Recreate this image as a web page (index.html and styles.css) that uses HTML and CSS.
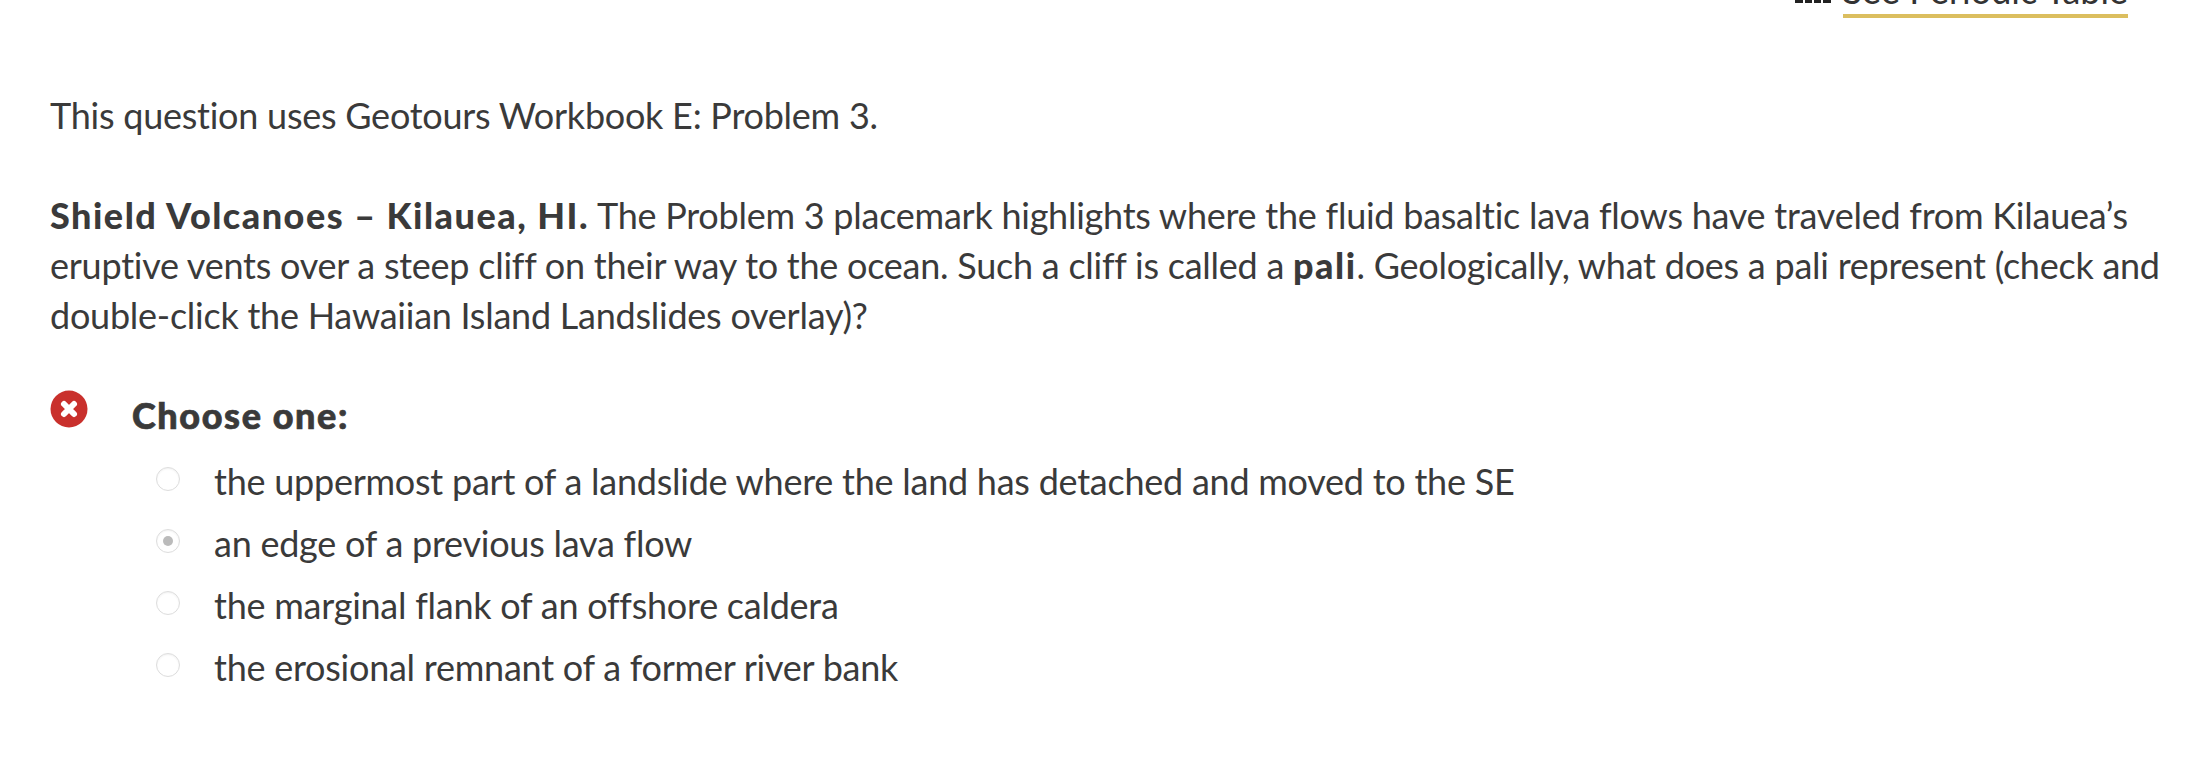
FILE: index.html
```html
<!DOCTYPE html>
<html lang="en">
<head>
<meta charset="utf-8">
<title>Question</title>
<link rel="stylesheet" href="styles.css">
</head>
<body>
<header class="topbar">
  <svg class="table-icon" viewBox="0 0 36 40" aria-hidden="true"><path d="M0 0h8v8H0zM10 0h7v8h-7zM19 0h7v8h-7zM28 0h8v8h-8z"/></svg>
  <a class="table-link">See Periodic Table</a>
</header>
<main class="question">
  <p class="intro">This question uses Geotours Workbook E: Problem 3.</p>
  <p class="stem"><strong>Shield Volcanoes – Kilauea, HI.</strong> The Problem 3 placemark highlights where the fluid basaltic lava flows have traveled from Kilauea’s eruptive vents over a steep cliff on their way to the ocean. Such a cliff is called a <strong>pali</strong>. Geologically, what does a pali represent (check and double-click the Hawaiian Island Landslides overlay)?</p>
  <section class="answer">
    <div class="status">
      <svg viewBox="0 0 38 38" aria-hidden="true"><circle cx="19" cy="19" r="18.5" fill="#c9302c"/><path d="M14 14l10 10M24 14L14 24" stroke="#fff" stroke-width="6" stroke-linecap="round"/></svg>
    </div>
    <div class="choices">
      <h2>Choose one:</h2>
      <ul>
        <li><span class="radio"></span>the uppermost part of a landslide where the land has detached and moved to the SE</li>
        <li><span class="radio checked"></span>an edge of a previous lava flow</li>
        <li><span class="radio"></span>the marginal flank of an offshore caldera</li>
        <li><span class="radio"></span>the erosional remnant of a former river bank</li>
      </ul>
    </div>
  </section>
</main>
</body>
</html>
```
FILE: styles.css
```css
* { box-sizing: border-box; }
html, body { margin: 0; height: 100%; background: #fff; overflow: hidden; }
body { font-family: Lato, "Open Sans", sans-serif; color: #3a3a3a; font-size: 36px; line-height: 50px; letter-spacing: -0.25px; font-variant-ligatures: none; }
.topbar { height: 18px; padding-right: 76px; display: flex; justify-content: flex-end; align-items: flex-end; gap: 12px; }
.table-icon { width: 36px; height: 40px; fill: #222; margin-bottom: -17px; }
.table-link { color: #333; line-height: 36px; height: 46px; flex: none; border-bottom: 4px solid #dbbe5f; letter-spacing: 0; }
.question { padding: 72px 16px 0 50px; }
.intro { margin: 0 0 50px; }
.stem { margin: 0; }
strong { font-weight: 900; letter-spacing: 1.5px; }
.answer { display: flex; margin-top: 50px; }
.status { width: 82px; flex: none; }
.status svg { display: block; width: 38px; height: 38px; }
h2 { margin: 0; font-size: 36px; font-weight: 900; line-height: 50px; letter-spacing: 1.6px; -webkit-text-stroke: 0.7px #3a3a3a; }
ul { list-style: none; margin: 16px 0 0 24px; padding: 0; }
li { display: flex; height: 62px; align-items: flex-start; line-height: 50px; white-space: nowrap; }
.radio { width: 24px; height: 24px; flex: none; margin: 11px 34px 0 0; border: 1px solid #ddd; border-radius: 50%; background: #fff; box-shadow: inset 0 1px 2px rgba(0,0,0,.06); position: relative; }
.checked::after { content: ""; position: absolute; left: 6px; top: 6px; width: 10px; height: 10px; border-radius: 50%; background: #bbb; }
```
